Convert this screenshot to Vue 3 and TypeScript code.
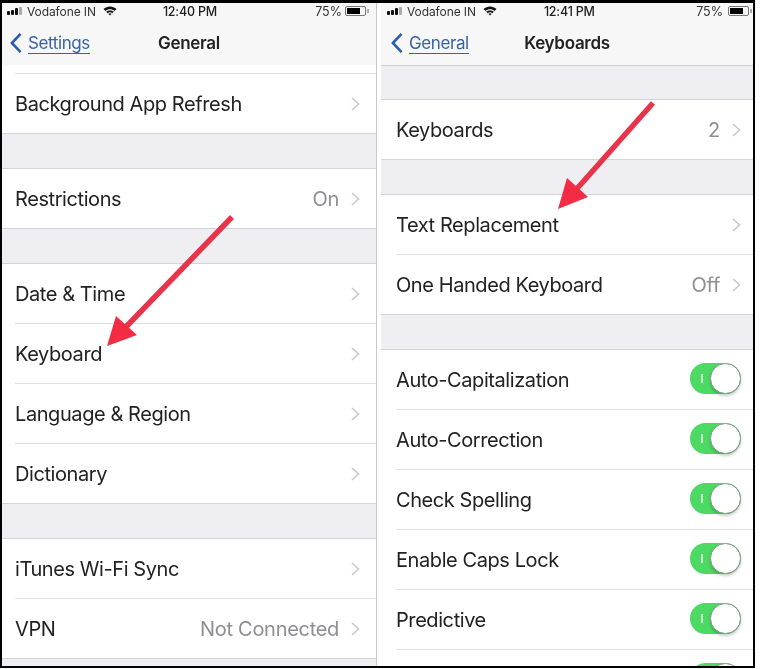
<script setup lang="ts">
type Row = { label: string; value?: string; toggle?: boolean; chevron?: boolean }
type Block = { rows: Row[] }

const general: Block[] = [
  { rows: [{ label: 'Background App Refresh', chevron: true }] },
  { rows: [{ label: 'Restrictions', value: 'On', chevron: true }] },
  {
    rows: [
      { label: 'Date & Time', chevron: true },
      { label: 'Keyboard', chevron: true },
      { label: 'Language & Region', chevron: true },
      { label: 'Dictionary', chevron: true },
    ],
  },
  {
    rows: [
      { label: 'iTunes Wi-Fi Sync', chevron: true },
      { label: 'VPN', value: 'Not Connected', chevron: true },
    ],
  },
]

const keyboards: Block[] = [
  { rows: [{ label: 'Keyboards', value: '2', chevron: true }] },
  {
    rows: [
      { label: 'Text Replacement', chevron: true },
      { label: 'One Handed Keyboard', value: 'Off', chevron: true },
    ],
  },
  {
    rows: [
      { label: 'Auto-Capitalization', toggle: true },
      { label: 'Auto-Correction', toggle: true },
      { label: 'Check Spelling', toggle: true },
      { label: 'Enable Caps Lock', toggle: true },
      { label: 'Predictive', toggle: true },
      { label: '', toggle: true },
    ],
  },
]

const screens = [
  { carrier: 'Vodafone IN', time: '12:40 PM', back: 'Settings', title: 'General', blocks: general, cls: 'left' },
  { carrier: 'Vodafone IN', time: '12:41 PM', back: 'General', title: 'Keyboards', blocks: keyboards, cls: 'right' },
]
</script>

<template>
  <div class="frame">
    <section v-for="s in screens" :key="s.title" class="screen" :class="s.cls">
      <header class="top">
        <div class="status">
          <span class="signal"><i></i><i></i><i></i><i class="off"></i></span>
          <span class="carrier">{{ s.carrier }}</span>
          <svg class="wifi" width="14" height="10" viewBox="0 0 17 12">
            <path d="M8.5 11.5 0.6 3.6C5 -0.6 12 -0.6 16.4 3.6Z" fill="#111" />
            <path d="M3 6 4 7C6.5 4.8 10.5 4.8 13 7L14 6C11 3.2 6 3.2 3 6Z" fill="#f7f7f7" />
            <path d="M5.6 8.6 6.5 9.5C7.6 8.7 9.4 8.7 10.5 9.5L11.4 8.6C9.8 7.2 7.2 7.2 5.6 8.6Z" fill="#f7f7f7" />
          </svg>
          <span class="time">{{ s.time }}</span>
          <span class="pct">75%</span>
          <span class="battery"><b></b></span>
          <span class="nub"></span>
        </div>
        <div class="nav">
          <svg class="back-icon" width="14" height="22" viewBox="0 0 14 24">
            <path d="M12 2 2.5 12 12 22" fill="none" stroke="#2a5cab" stroke-width="2.8" />
          </svg>
          <span class="back">{{ s.back }}</span>
          <span class="title">{{ s.title }}</span>
        </div>
      </header>

      <div class="list">
        <div v-for="(b, i) in s.blocks" :key="i" class="block">
          <div v-for="r in b.rows" :key="r.label" class="row">
            <span class="label">{{ r.label }}</span>
            <span v-if="r.value" class="value">{{ r.value }}</span>
            <svg v-if="r.chevron" class="chev" width="9" height="14" viewBox="0 0 9 14">
              <path d="M1 1 7.5 7 1 13" fill="none" stroke="#cbcbcf" stroke-width="1.7" />
            </svg>
            <span v-if="r.toggle" class="toggle"><em></em><u></u></span>
          </div>
        </div>
      </div>
    </section>

    <svg class="arrow" width="755" height="669" viewBox="0 0 755 669">
      <path d="M232 217 122 331" stroke="#e8344a" stroke-width="5.5" />
      <path d="M107 346 116 316 137 335Z" fill="#f32c44" />
      <path d="M653 103 574 192" stroke="#e8344a" stroke-width="5.5" />
      <path d="M558 209 567 178 588 197Z" fill="#f32c44" />
    </svg>
  </div>
</template>

<style>
html,
body {
  margin: 0;
  background: #fff;
}
</style>

<style scoped>
.frame {
  position: relative;
  box-sizing: border-box;
  width: 755px;
  height: 668px;
  display: flex;
  border: solid #000;
  border-width: 3px 2px 2px 2px;
  overflow: hidden;
  font-family: Inter, 'Liberation Sans', sans-serif;
  color: #222;
}

.screen {
  flex: none;
  height: 100%;
  overflow: hidden;
  background: #fff;
  display: flex;
  flex-direction: column;
  filter: blur(0.45px);
}

.screen.left {
  width: 374px;
}

.screen.right {
  flex: 1;
  margin-left: 5px;
}

.frame::before {
  content: '';
  position: absolute;
  left: 374px;
  top: 0;
  bottom: 0;
  width: 1px;
  background: #c9c9cc;
}

.top {
  height: 63px;
  flex: none;
  box-sizing: border-box;
  background: #f7f7f7;
  border-bottom: 1px solid #d0d0d2;
}

.status {
  height: 16px;
  display: flex;
  align-items: center;
  font-size: 12px;
  padding-left: 5px;
  padding-right: 7px;
}

.right .status {
  padding-left: 6px;
  padding-right: 1px;
}

.signal {
  display: flex;
  align-items: flex-end;
  gap: 1px;
  height: 8px;
  margin-right: 5px;
}

.signal i {
  width: 3px;
  background: #111;
  border-radius: 1px;
}

.signal i:nth-child(1) {
  height: 4px;
}
.signal i:nth-child(2) {
  height: 5px;
}
.signal i:nth-child(3) {
  height: 7px;
}
.signal i.off {
  height: 8px;
  background: #aaa;
}

.carrier {
  color: #333;
  margin-right: 7px;
  font-size: 12px;
  letter-spacing: -0.1px;
}

.time {
  margin-left: 46px;
  font-size: 12.5px;
  font-weight: 500;
  letter-spacing: -0.2px;
}

.right .time {
  margin-left: 47px;
}

.pct {
  margin-left: auto;
  font-size: 12.5px;
  color: #333;
  margin-right: 3px;
}

.right .pct {
  margin-right: 5px;
}

.battery {
  width: 21px;
  height: 10px;
  box-sizing: border-box;
  border: 1px solid #777;
  border-radius: 2px;
  padding: 1px;
  display: flex;
}

.battery b {
  width: 75%;
  background: #000;
}

.nub {
  width: 2px;
  height: 4px;
  margin-left: 1px;
  background: #aaa;
}

.nav {
  position: relative;
  height: 46px;
  box-sizing: border-box;
  padding-top: 2px;
  display: flex;
  align-items: center;
  padding-left: 7px;
}

.right .nav {
  padding-left: 9px;
}

.back {
  margin-left: 5px;
  font-size: 17px;
  letter-spacing: -0.4px;
  color: #3a62a5;
  border-bottom: 1px solid #3a62a5;
  line-height: 20px;
}

.title {
  position: absolute;
  left: 0;
  right: 0;
  text-align: center;
  font-size: 17px;
  font-weight: 600;
  letter-spacing: -0.3px;
}

.list {
  flex: 1;
  background: #eeeef3;
}

.block {
  background: #fff;
  border-top: 1px solid #d4d4d8;
  border-bottom: 1px solid #d4d4d8;
  margin-bottom: 34px;
}

.left .block:first-child {
  margin-top: -1px;
  border-top: none;
  padding-top: 8px;
}

.left .block:first-child .row {
  border-top: 1px solid #dcdcdf;
  margin-left: 13px;
}

.right .block:first-child {
  margin-top: 33px;
}

.row {
  height: 59px;
  display: flex;
  align-items: center;
  margin-left: 13px;
  padding-right: 16px;
  border-top: 1px solid #e0e0e3;
  font-size: 20px;
  letter-spacing: -0.42px;
}

.row:first-child {
  border-top: none;
}

.right .row {
  margin-left: 15px;
  padding-right: 12px;
}

.label {
  flex: 1;
  white-space: nowrap;
}

.value {
  color: #8e8e93;
  margin-right: 12px;
  letter-spacing: -0.3px;
}

.toggle {
  position: relative;
  width: 51px;
  height: 31px;
  margin-top: -2px;
  border-radius: 16px;
  background: #4cd964;
}

.toggle em {
  position: absolute;
  left: 11px;
  top: 11px;
  width: 2px;
  height: 9px;
  background: #c9f2d0;
}

.toggle u {
  position: absolute;
  right: 0;
  top: 0;
  width: 29px;
  height: 29px;
  background: #fff;
  border-radius: 50%;
  border: 1px solid #8a9a8c;
  box-shadow: 0 2px 3px rgba(0, 0, 0, 0.2);
}

.arrow {
  position: absolute;
  left: -2px;
  top: -3px;
  pointer-events: none;
}
</style>
